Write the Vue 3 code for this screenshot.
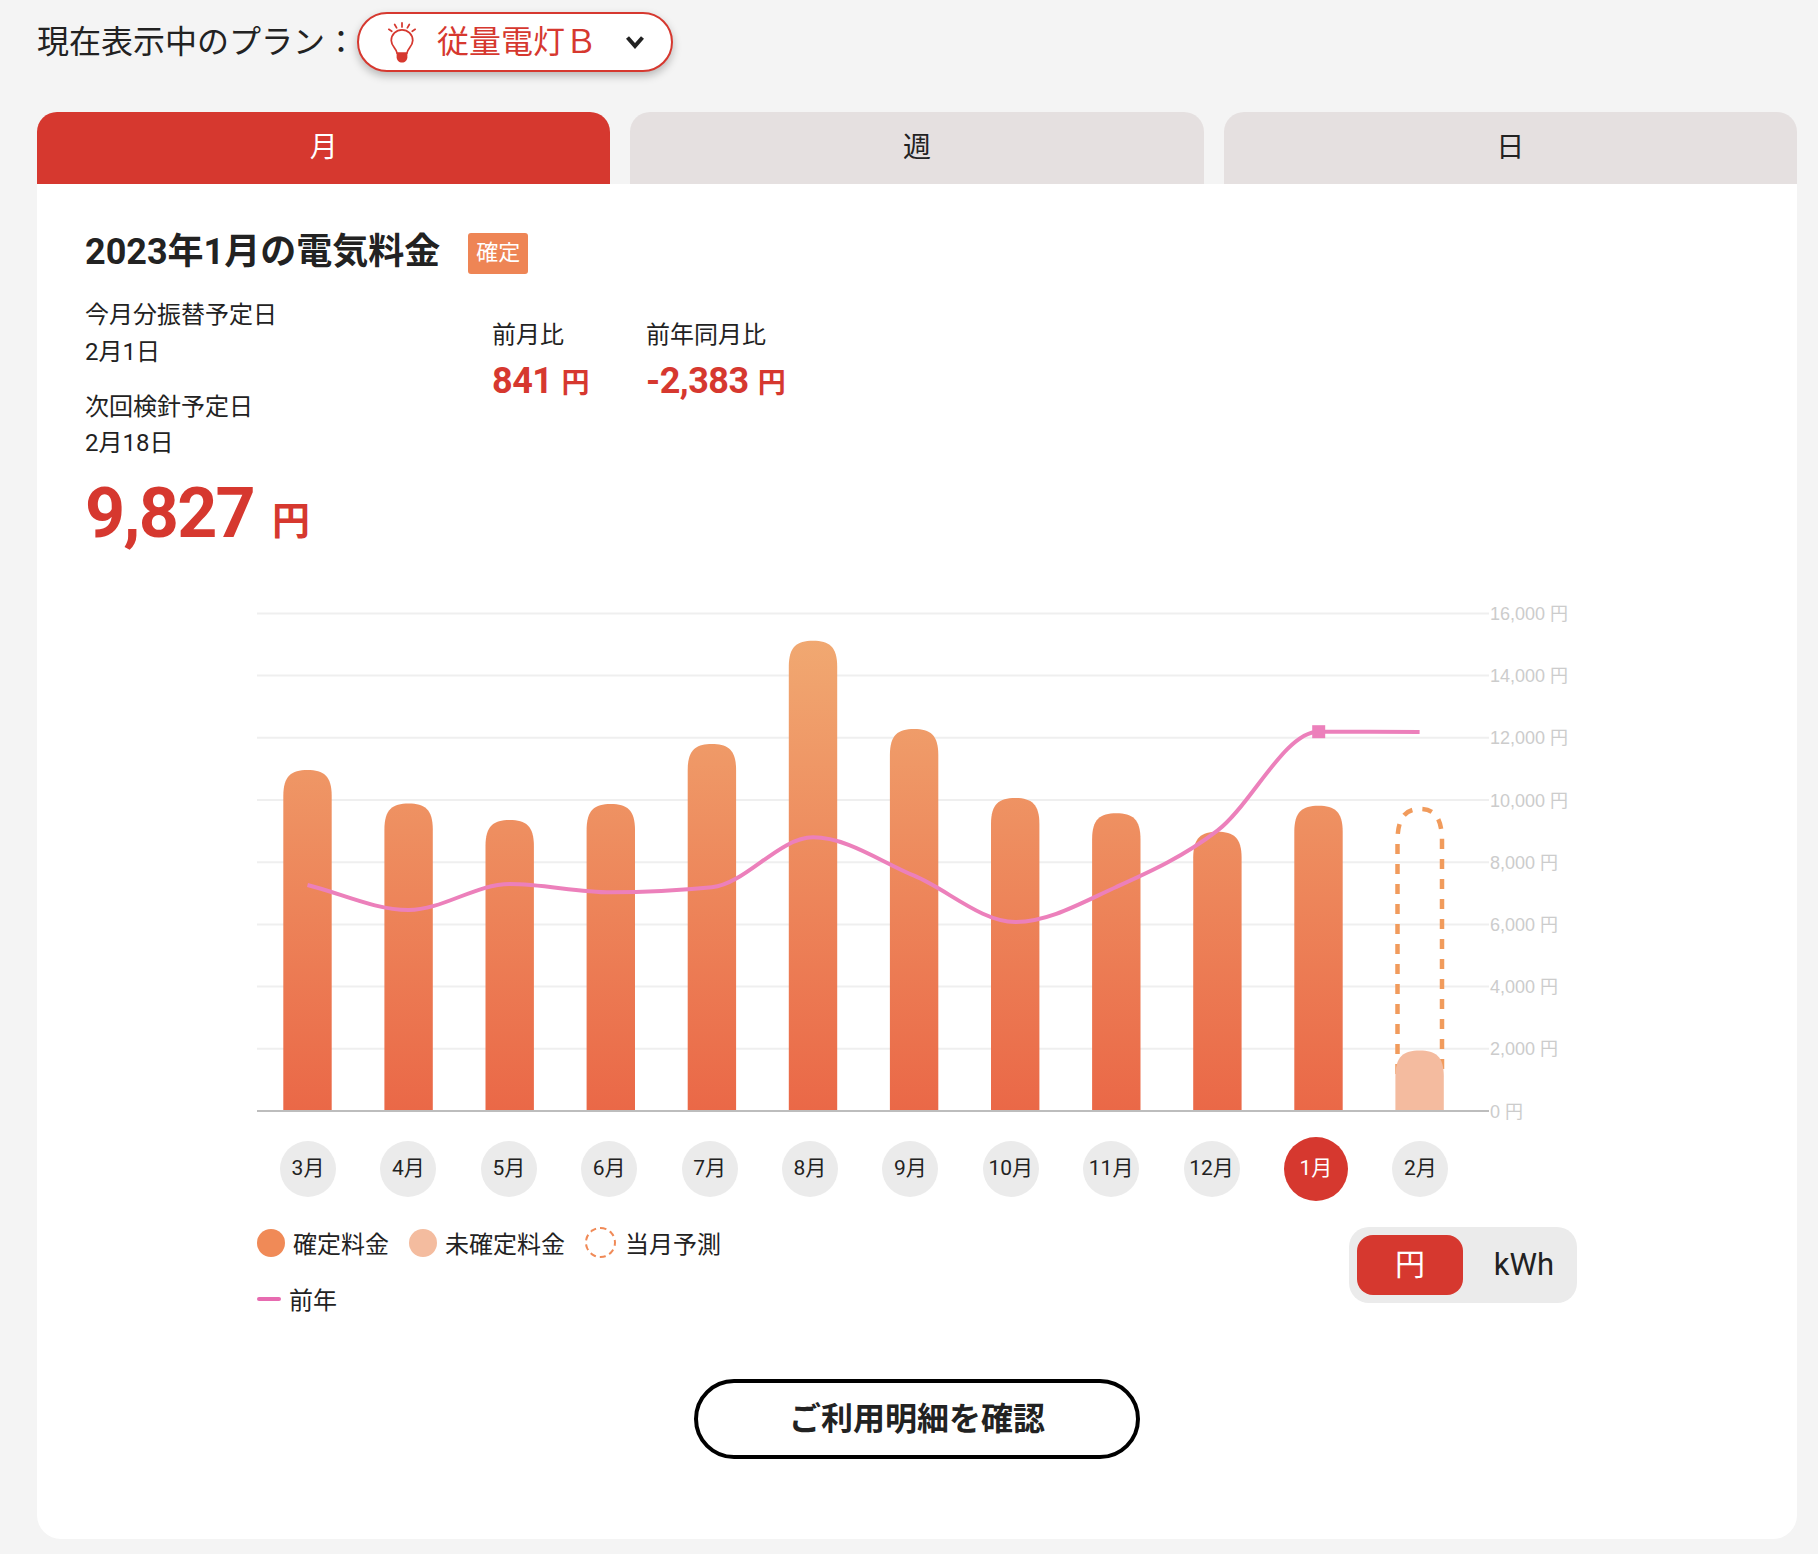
<template>
  <div class="page">
    <!-- Plan selector -->
    <div class="plan-row">
      <span class="plan-label">現在表示中のプラン：</span>
      <button class="plan-select">
        <svg class="bulb" viewBox="0 0 30 42" width="30" height="41">
          <g fill="none" stroke="#d6382f" stroke-width="1.8" stroke-linecap="round">
            <path d="M15 1V5M7.5 2.5L9.5 6M22.5 2.5L20.5 6M1.5 7.5L4.5 9.5M28.5 7.5L25.5 9.5" />
            <path d="M10 32C9.5 27 4 25 4 19A11 11 0 0 1 26 19C26 25 20.5 27 20 32Z" />
          </g>
          <path d="M9.5 32H20.5V36C20.5 39 18 41.5 15 41.5C12 41.5 9.5 39 9.5 36Z" fill="#d6382f" />
        </svg>
        <span class="plan-name">従量電灯Ｂ</span>
        <svg class="chevron" viewBox="0 0 20 14" width="20" height="14">
          <path d="M2.5 2.5L10 11L17.5 2.5" fill="none" stroke="#222" stroke-width="4" />
        </svg>
      </button>
    </div>

    <!-- Tabs -->
    <div class="tabs">
      <div v-for="tab in tabs" :key="tab" class="tab" :class="{ active: tab === '月' }">{{ tab }}</div>
    </div>

    <div class="card">
      <div class="title-row">
        <h1>2023年1月の電気料金</h1>
        <span class="badge">確定</span>
      </div>

      <div class="info-row">
        <div class="dates">
          <p>今月分振替予定日</p>
          <p>2月1日</p>
          <p class="next">次回検針予定日</p>
          <p>2月18日</p>
        </div>
        <div class="compare">
          <div class="compare-item">
            <p>前月比</p>
            <div class="diff">841<span>円</span></div>
          </div>
          <div class="compare-item">
            <p>前年同月比</p>
            <div class="diff">-2,383<span>円</span></div>
          </div>
        </div>
      </div>

      <div class="total">9,827<span>円</span></div>

      <!-- Chart -->
      <svg class="chart" viewBox="257 600 1340 525" width="1340" height="525">
        <defs>
          <linearGradient id="barFill" gradientUnits="userSpaceOnUse" x1="0" y1="620" x2="0" y2="1112">
            <stop offset="0" stop-color="#f1ab73" />
            <stop offset="1" stop-color="#ea6847" />
          </linearGradient>
        </defs>
        <g v-for="t in ticks" :key="t.value">
          <line x1="257" x2="1489" :y1="t.y" :y2="t.y" :stroke="t.value === 0 ? '#bdbdbd' : '#efefef'" stroke-width="2" />
          <text x="1490" :y="t.y + 6.5" class="tick">{{ t.label }}</text>
        </g>
        <path v-for="b in bars" :key="b.x" :d="barPath(b.x, b.top)" fill="url(#barFill)" />
        <path d="M1397.5 1075V842C1397.5 818 1406 810 1420 810C1434 810 1442 818 1442 842V1075" fill="none" stroke="#f19b5c" stroke-width="4.5" stroke-dasharray="10 10" />
        <path :d="barPath(1419.6, 1051.5)" fill="#f4bb9f" />
        <path :d="linePath" fill="none" stroke="#ec80bb" stroke-width="4" />
        <rect x="1312.2" y="726.2" width="13" height="13" fill="#ec80bb" />
      </svg>

      <!-- Month labels -->
      <div class="months">
        <div v-for="m in months" :key="m" class="month" :class="{ active: m === '1月' }">{{ m }}</div>
      </div>

      <div class="bottom-row">
        <div class="legend">
          <div class="legend-item"><i class="dot fixed"></i>確定料金</div>
          <div class="legend-item"><i class="dot pending"></i>未確定料金</div>
          <div class="legend-item"><i class="dot forecast"></i>当月予測</div>
          <div class="legend-item last-year"><i class="dash"></i>前年</div>
        </div>
        <div class="unit-toggle">
          <div class="unit active">円</div>
          <div class="unit kwh">kWh</div>
        </div>
      </div>

      <button class="detail-btn">ご利用明細を確認</button>
    </div>
  </div>
</template>

<script setup>
const tabs = ['月', '週', '日']
const months = ['3月', '4月', '5月', '6月', '7月', '8月', '9月', '10月', '11月', '12月', '1月', '2月']

const yOf = (v) => 1112 - v * 0.0311

const ticks = [16000, 14000, 12000, 10000, 8000, 6000, 4000, 2000, 0].map(value => ({
  value,
  y: yOf(value),
  label: value.toLocaleString('en-US') + ' 円'
}))

const centerX = (i) => 307.5 + 101.1 * i

// bar tops in page pixels
const bars = [771, 804.5, 821, 805, 745, 641.7, 730, 799, 814.3, 832.7, 806.7].map((top, i) => ({
  x: centerX(i),
  top
}))

const barPath = (cx, top) => {
  const l = cx - 24.2
  const r = cx + 24.2
  return `M${l} 1111V${top + 26}C${l} ${top + 6} ${l + 8} ${top} ${cx} ${top}C${r - 8} ${top} ${r} ${top + 6} ${r} ${top + 26}V1111Z`
}

// last year's line, monotone curve through the points
const lineY = [886, 911, 885, 893.3, 888.3, 838.3, 876.7, 923, 888, 831.7, 732.7, 733]
const pts = lineY.map((y, i) => [centerX(i), y])

const slopes = pts.map((p, i) => {
  if (i === 0 || i === pts.length - 1) return null
  const s0 = (p[1] - pts[i - 1][1]) / (p[0] - pts[i - 1][0])
  const s1 = (pts[i + 1][1] - p[1]) / (pts[i + 1][0] - p[0])
  if (s0 * s1 <= 0) return 0
  return (Math.sign(s0) + Math.sign(s1)) * Math.min(Math.abs(s0), Math.abs(s1), Math.abs(s0 + s1) / 4)
})
slopes[0] = (pts[1][1] - pts[0][1]) / (pts[1][0] - pts[0][0])
slopes[pts.length - 1] = 0

const linePath = pts.reduce((d, p, i) => {
  if (i === 0) return `M${p[0]} ${p[1]}`
  const prev = pts[i - 1]
  const dx = (p[0] - prev[0]) / 3
  return `${d}C${prev[0] + dx} ${prev[1] + slopes[i - 1] * dx} ${p[0] - dx} ${p[1] - slopes[i] * dx} ${p[0]} ${p[1]}`
}, '')
</script>

<style>
body {
  background: #f4f4f4;
}
</style>

<style scoped>
.page {
  padding: 0 21px 14px 37px;
  color: #222;
  font-family: Roboto, "Noto Sans CJK JP", sans-serif;
}

p {
  margin: 0;
}

.plan-row {
  display: flex;
  align-items: center;
  padding-top: 12px;
  height: 60px;
}

.plan-label {
  font-size: 32px;
  width: 320px;
  padding-bottom: 6px;
  white-space: nowrap;
}

.plan-select {
  display: flex;
  align-items: center;
  width: 316px;
  height: 60px;
  padding: 0 0 0 28px;
  background: white;
  border: 2.5px solid #d6382f;
  border-radius: 30px;
  box-shadow: 0 4px 8px rgba(0, 0, 0, 0.25);
  font-family: inherit;
}

.plan-name {
  margin-left: 20px;
  padding-bottom: 6px;
  font-size: 32px;
  color: #d6382f;
  white-space: nowrap;
}

.chevron {
  margin-left: 28px;
}

.tabs {
  display: flex;
  gap: 20px;
  margin-top: 40px;
}

.tab {
  flex: 1;
  height: 72px;
  line-height: 72px;
  text-align: center;
  font-size: 28px;
  background: #e5e0e0;
  border-radius: 20px 20px 0 0;
}

.tab.active {
  background: #d6382f;
  color: white;
}

.card {
  background: white;
  border-radius: 0 0 24px 24px;
  padding: 49px 48px 80px;
}

.title-row {
  display: flex;
  align-items: center;
  height: 41px;
}

h1 {
  margin: 0;
  padding-bottom: 4px;
  font-size: 36px;
  font-weight: 700;
  line-height: 38px;
}

.badge {
  margin-left: 28px;
  width: 60px;
  height: 41px;
  line-height: 39px;
  text-align: center;
  background: #ee8555;
  color: white;
  font-size: 22px;
  border-radius: 3px;
}

.info-row {
  display: flex;
  margin-top: 23px;
}

.dates {
  width: 407px;
  font-size: 24px;
  line-height: 36.5px;
}

.next {
  margin-top: 18.5px;
}

.compare {
  display: flex;
  gap: 57px;
  padding-top: 20px;
  font-size: 24px;
  line-height: 36px;
}

.diff {
  margin-top: 6px;
  height: 44px;
  line-height: 44px;
  font-size: 36px;
  font-weight: 700;
  letter-spacing: -0.5px;
  color: #d6382f;
  white-space: nowrap;
}

.diff span {
  margin-left: 9px;
  font-size: 28px;
}

.total {
  margin-top: 16.5px;
  height: 70px;
  line-height: 70px;
  font-size: 70px;
  font-weight: 700;
  letter-spacing: -1.8px;
  color: #d6382f;
  white-space: nowrap;
}

.total span {
  margin-left: 18px;
  font-size: 38px;
  vertical-align: 3px;
}

.chart {
  display: block;
  margin: 51px 0 0 172px;
}

.tick {
  font-family: "Liberation Sans", "Noto Sans CJK JP", sans-serif;
  font-size: 18px;
  fill: #cccccc;
}

.months {
  display: flex;
  align-items: center;
  gap: 44.4px;
  height: 64px;
  margin: 13px 0 0 195px;
}

.month {
  flex: none;
  width: 56px;
  height: 56px;
  line-height: 54px;
  text-align: center;
  font-size: 21px;
  background: #ebebeb;
  border-radius: 50%;
  white-space: nowrap;
}

.month.active {
  width: 64px;
  height: 64px;
  line-height: 62px;
  background: #d6382f;
  color: white;
}

.bottom-row {
  display: flex;
  justify-content: space-between;
  width: 1320px;
  height: 89px;
  margin: 26px 0 0 172px;
}

.legend {
  display: flex;
  flex-wrap: wrap;
  align-content: flex-start;
  gap: 24px 20px;
  width: 600px;
  margin-top: -1px;
  font-size: 24px;
}

.legend-item {
  display: flex;
  align-items: center;
  height: 32px;
  white-space: nowrap;
}

.last-year {
  width: 100%;
}

.dot {
  width: 28px;
  height: 28px;
  margin: 2px 8px 0 0;
  border-radius: 50%;
}

.dot.fixed {
  background: #f08a57;
}

.dot.pending {
  background: #f4bc9f;
}

.dot.forecast {
  box-sizing: border-box;
  width: 31px;
  height: 31px;
  margin: 0 9px 0 0;
  border: 2px dashed #f08a57;
}

.dash {
  width: 24px;
  height: 4px;
  margin: 2px 8px 0 0;
  background: #e76bb0;
  border-radius: 2px;
}

.unit-toggle {
  display: flex;
  box-sizing: border-box;
  width: 228px;
  height: 76px;
  padding: 8px;
  background: #ebebeb;
  border-radius: 20px;
}

.unit {
  box-sizing: border-box;
  flex: none;
  width: 106px;
  line-height: 60px;
  text-align: center;
  font-size: 30px;
  border-radius: 16px;
}

.unit.kwh {
  padding-left: 16px;
  font-size: 31px;
}

.unit.active {
  background: #d6382f;
  color: white;
}

.detail-btn {
  display: block;
  box-sizing: border-box;
  width: 446px;
  height: 80px;
  margin: 63px auto 0;
  padding: 0 0 7px;
  background: white;
  border: 4px solid #000;
  border-radius: 40px;
  font-family: inherit;
  font-size: 32px;
  font-weight: 700;
  color: #222;
}
</style>
